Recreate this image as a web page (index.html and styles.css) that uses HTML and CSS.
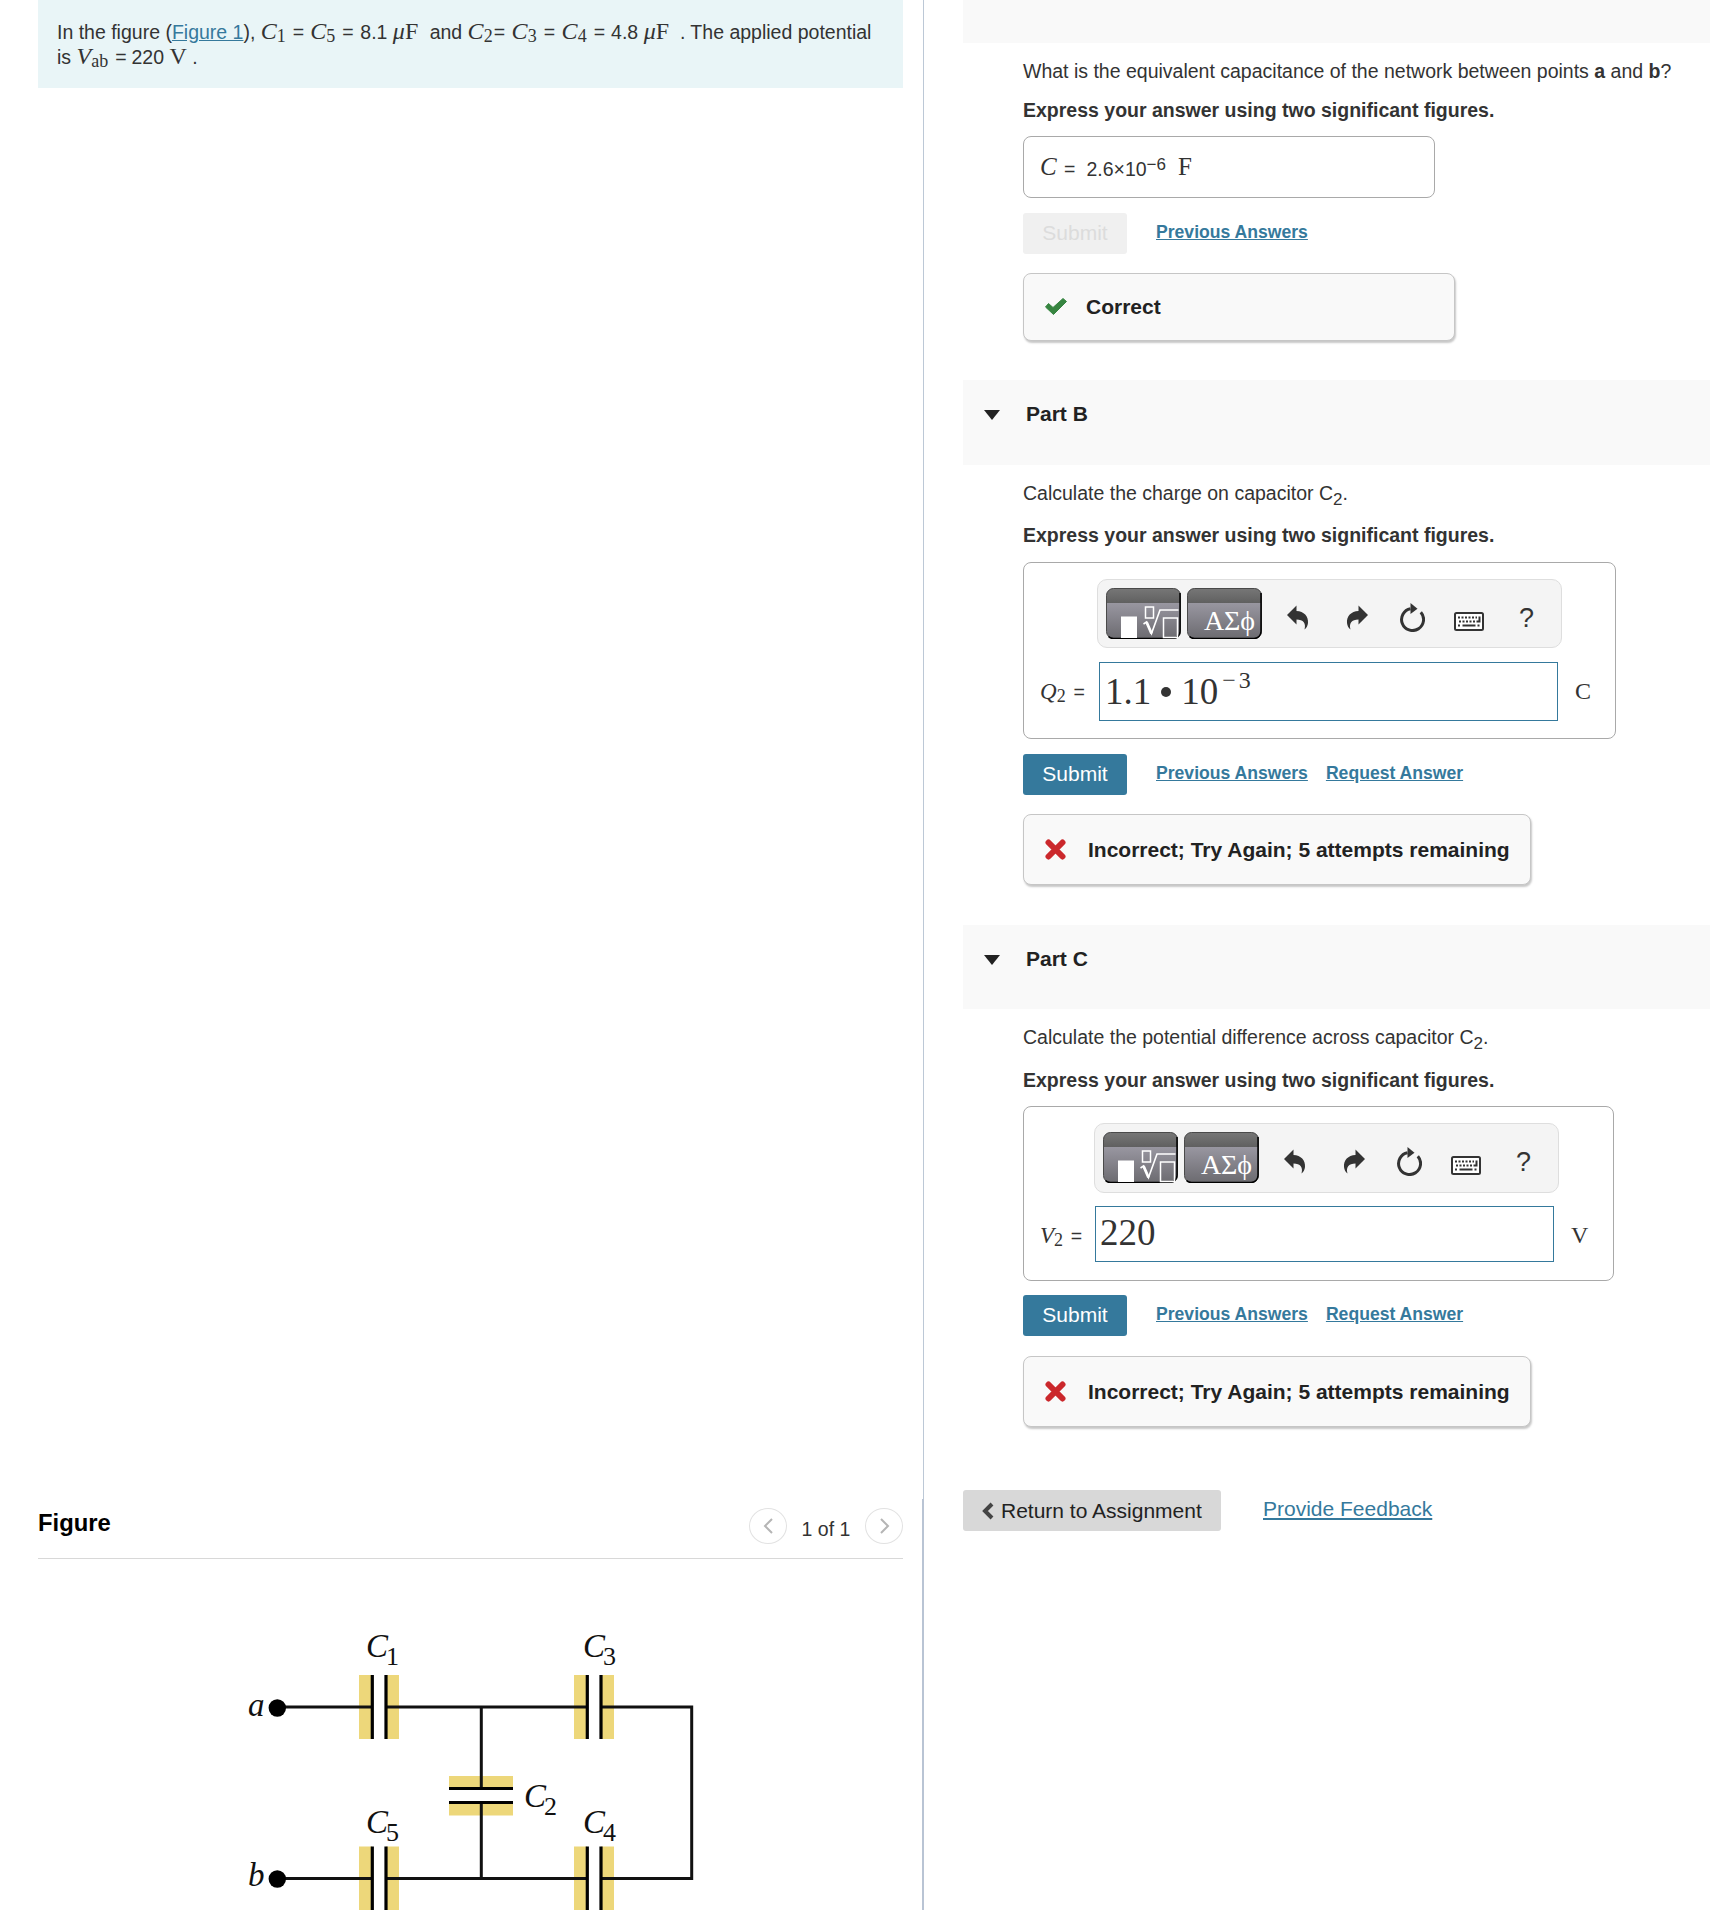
FILE: index.html
```html
<!DOCTYPE html>
<html lang="en">
<head>
    <meta charset="UTF-8">
    <meta name="viewport" content="width=device-width, initial-scale=1.0">
    <title>Capacitor Network</title>
    <link rel="stylesheet" href="styles.css">
</head>
<body>
    <!-- shared icons -->
    <svg class="icon-defs" width="0" height="0">
        <defs>
            <linearGradient id="btnTop" x1="0" y1="0" x2="0" y2="1">
                <stop offset="0" stop-color="#777"/>
                <stop offset="1" stop-color="#606060"/>
            </linearGradient>
            <linearGradient id="btnBody" x1="0" y1="0" x2="0" y2="1">
                <stop offset="0.3" stop-color="#9896a0"/>
                <stop offset="1" stop-color="#6c6b70"/>
            </linearGradient>
            <symbol id="btnFace" viewBox="0 0 75 51">
                <rect x="0.5" y="0.5" width="74" height="50" rx="7" fill="url(#btnBody)"/>
                <path d="M0.5 15V7.5a7 7 0 0 1 7-7h60a7 7 0 0 1 7 7V15z" fill="url(#btnTop)"/>
                <rect x="0.5" y="0.5" width="74" height="50" rx="7" fill="none" stroke="#4a4a4a"/>
                <path d="M74 5V43.500a7 7 0 0 1-7 7H7.500a7 7 0 0 1-5-2" fill="none" stroke="#000" stroke-width="1.500"/>
            </symbol>
            <symbol id="template" viewBox="0 0 75 51">
                <use href="#btnFace" width="75" height="51"/>
                <rect x="15" y="28.500" width="16" height="21.500" fill="#fff"/>
                <rect x="39.500" y="19" width="8" height="11" fill="none" stroke="#fff" stroke-width="1.500"/>
                <path d="M37.500 36l3-2 5 11.500L54 22h18.500" fill="none" stroke="#fff" stroke-width="1.600"/>
                <path d="M40.500 34l5 11.500" fill="none" stroke="#fff" stroke-width="2.800"/>
                <rect x="57.500" y="30" width="14" height="19.500" fill="none" stroke="#fff" stroke-width="1.500"/>
            </symbol>
            <symbol id="greek" viewBox="0 0 75 51">
                <use href="#btnFace" width="75" height="51"/>
                <text x="17" y="42" class="greek-text" textLength="51">ΑΣϕ</text>
            </symbol>
            <symbol id="undo" viewBox="0 0 22 25">
                <path d="M0 10L9.500 0.500V6C17 6.500 21.500 11 21 18c-.2 2.500-1.500 5-3.500 6.500C19.200 18.500 16.500 14.500 9.500 14.500V19.500z" fill="#333"/>
            </symbol>
            <symbol id="reset" viewBox="0 0 26 30">
                <path d="M21.800 10.200A11 11 0 1 1 11.500 6.700" fill="none" stroke="#333" stroke-width="3"/>
                <path d="M11.500 1L18.500 6.700L11.500 12z" fill="#333"/>
            </symbol>
            <symbol id="keyboard" viewBox="0 0 30 19">
                <rect x="1" y="1" width="28" height="17" rx="1.500" fill="#fff" stroke="#333" stroke-width="2"/>
                <path d="M4 5.500H23M5 9.500H22M4 13.500H7M23.500 13.500H26.500" stroke="#333" stroke-width="2" stroke-dasharray="2 1.500"/>
                <path d="M8.500 13.500H21.500M25.500 4.500V9.500H22.500" fill="none" stroke="#333" stroke-width="2"/>
            </symbol>
            <symbol id="check" viewBox="0 0 22 17">
                <path d="M0.500 9L3.500 5.500L8 9.500L18 0.500L21.500 3.500L8.500 16.500z" fill="#378541" stroke="#378541" stroke-linejoin="round"/>
            </symbol>
            <symbol id="cross" viewBox="0 0 21 21">
                <path d="M3.500 3.500L17.500 17.500M17.500 3.500L3.500 17.500" stroke="#cb282c" stroke-width="6" stroke-linecap="round"/>
            </symbol>
        </defs>
    </svg>

    <div class="page">
        <div class="left-pane">
            <div class="intro">
                In the figure (<a href="#">Figure 1</a>), <span class="var w49"><i>C</i><sub>1</sub> <b>=</b></span><span class="var w50"><i>C</i><sub>5</sub> <b>=</b></span>8.1 <span class="unit wide"><i>μ</i>F</span> and <span class="var w44"><i>C</i><sub>2</sub><b>=</b></span><span class="var w50"><i>C</i><sub>3</sub> <b>=</b></span><span class="var w49"><i>C</i><sub>4</sub> <b>=</b></span>4.8 <span class="unit"><i>μ</i>F</span>&nbsp; <span class="nowrap">. The applied potential</span><br>
                is <span class="var w55"><i>V</i><sub>ab</sub> <b>=</b></span>220 <span class="volt">V</span> .
            </div>
            <div class="figure">
                <div class="figure-header">
                    <h2>Figure</h2>
                    <div class="pager">
                        <span class="circle"><svg width="12" height="16"><path d="M10 1L3 8l7 7" fill="none" stroke="#b5b5b5" stroke-width="2"/></svg></span>
                        <span class="count">1 of 1</span>
                        <span class="circle"><svg width="12" height="16"><path d="M3 1l7 7-7 7" fill="none" stroke="#b5b5b5" stroke-width="2"/></svg></span>
                    </div>
                </div>
                <svg class="circuit" width="500" height="310" viewBox="220 1600 500 310">
                    <g fill="#edd77a">
                        <rect x="359" y="1675" width="13" height="64"/>
                        <rect x="386" y="1675" width="13" height="64"/>
                        <rect x="574" y="1675" width="13" height="64"/>
                        <rect x="601" y="1675" width="13" height="64"/>
                        <rect x="449" y="1776" width="64" height="12"/>
                        <rect x="449" y="1803" width="64" height="12.500"/>
                        <rect x="359" y="1846.500" width="13" height="64"/>
                        <rect x="386" y="1846.500" width="13" height="64"/>
                        <rect x="574" y="1846.500" width="13" height="64"/>
                        <rect x="601" y="1846.500" width="13" height="64"/>
                    </g>
                    <path d="M277 1707H372M386 1707H587M601 1707H691.700V1878.500H601M277 1878.500H372M386 1878.500H587M481.300 1707V1788M481.300 1803V1878.500" fill="none" stroke="#111" stroke-width="3"/>
                    <path d="M372.300 1675v64M386 1675v64M587.300 1675v64M601 1675v64M449 1788.500h64M449 1802.500h64M372.300 1846.500v64M386 1846.500v64M587.300 1846.500v64M601 1846.500v64" stroke="#000" stroke-width="3.200"/>
                    <circle cx="277.300" cy="1708" r="8.700"/>
                    <circle cx="277.300" cy="1879" r="8.700"/>
                    <g class="circuit-label">
                        <text x="248" y="1716">a</text>
                        <text x="248" y="1886">b</text>
                        <text x="366" y="1657">C</text><text class="num" x="386" y="1665">1</text>
                        <text x="583" y="1657">C</text><text class="num" x="603" y="1665">3</text>
                        <text x="524" y="1807">C</text><text class="num" x="544" y="1815">2</text>
                        <text x="366" y="1833">C</text><text class="num" x="386" y="1841">5</text>
                        <text x="583" y="1833">C</text><text class="num" x="603" y="1841">4</text>
                    </g>
                </svg>
            </div>
        </div>

        <div class="right-pane">
            <div class="part part-a">
                <div class="part-header"></div>
                <div class="part-body">
                    <p>What is the equivalent capacitance of the network between points <b>a</b> and <b>b</b>?</p>
                    <p class="express">Express your answer using two significant figures.</p>
                    <div class="answer-simple">
                        <i class="big-var">C</i><span>=</span><span class="value">2.6×10<sup>−6</sup></span><span class="big-unit">F</span>
                    </div>
                    <div class="actions">
                        <button class="submit" disabled>Submit</button>
                        <a href="#">Previous Answers</a>
                    </div>
                    <div class="feedback correct"><svg width="22" height="17"><use href="#check"/></svg>Correct</div>
                </div>
            </div>

            <div class="part part-b">
                <div class="part-header"><span class="caret"></span><h3>Part B</h3></div>
                <div class="part-body">
                    <p>Calculate the charge on capacitor C<sub>2</sub>.</p>
                    <p class="express">Express your answer using two significant figures.</p>
                    <div class="answer-box">
                        <div class="toolbar">
                            <svg width="75" height="51"><use href="#template"/></svg>
                            <svg class="greek-btn" width="75" height="51"><use href="#greek"/></svg>
                            <svg class="undo" width="22" height="25"><use href="#undo"/></svg>
                            <svg class="redo" width="22" height="25"><use href="#undo"/></svg>
                            <svg class="reset" width="26" height="30"><use href="#reset"/></svg>
                            <svg class="keyboard" width="30" height="19"><use href="#keyboard"/></svg>
                            <span class="help">?</span>
                        </div>
                        <div class="entry">
                            <span class="label"><i>Q</i><sub>2</sub> <b>=</b></span>
                            <div class="input">1.1<span class="dot"></span>10<span class="exp">−<span>3</span></span></div>
                            <span class="entry-unit">C</span>
                        </div>
                    </div>
                    <div class="actions">
                        <button class="submit">Submit</button>
                        <a href="#">Previous Answers</a>
                        <a href="#">Request Answer</a>
                    </div>
                    <div class="feedback"><svg width="21" height="21"><use href="#cross"/></svg>Incorrect; Try Again; 5 attempts remaining</div>
                </div>
            </div>

            <div class="part part-c">
                <div class="part-header"><span class="caret"></span><h3>Part C</h3></div>
                <div class="part-body">
                    <p>Calculate the potential difference across capacitor C<sub>2</sub>.</p>
                    <p class="express">Express your answer using two significant figures.</p>
                    <div class="answer-box">
                        <div class="toolbar">
                            <svg width="75" height="51"><use href="#template"/></svg>
                            <svg class="greek-btn" width="75" height="51"><use href="#greek"/></svg>
                            <svg class="undo" width="22" height="25"><use href="#undo"/></svg>
                            <svg class="redo" width="22" height="25"><use href="#undo"/></svg>
                            <svg class="reset" width="26" height="30"><use href="#reset"/></svg>
                            <svg class="keyboard" width="30" height="19"><use href="#keyboard"/></svg>
                            <span class="help">?</span>
                        </div>
                        <div class="entry">
                            <span class="label"><i>V</i><sub>2</sub> <b>=</b></span>
                            <div class="input">220</div>
                            <span class="entry-unit">V</span>
                        </div>
                    </div>
                    <div class="actions">
                        <button class="submit">Submit</button>
                        <a href="#">Previous Answers</a>
                        <a href="#">Request Answer</a>
                    </div>
                    <div class="feedback"><svg width="21" height="21"><use href="#cross"/></svg>Incorrect; Try Again; 5 attempts remaining</div>
                </div>
            </div>

            <div class="footer">
                <button class="return"><svg width="12" height="18"><path d="M10 2L3 9l7 7" fill="none" stroke="#444" stroke-width="4"/></svg>Return to Assignment</button>
                <a href="#">Provide Feedback</a>
            </div>
        </div>
    </div>
</body>
</html>
```
FILE: styles.css
```css
* {
    box-sizing: border-box;
}

body {
    margin: 0;
    background-color: #fff;
    color: #333;
    font-family: "Liberation Sans", Arial, sans-serif;
    font-size: 19.5px;
    line-height: 24px;
}

a {
    color: #35799c;
}

p {
    margin: 0;
    white-space: nowrap;
}

sub, sup {
    line-height: 0;
}

.icon-defs {
    position: absolute;
}

.page {
    display: flex;
    height: 1910px;
    overflow: hidden;
}

/* Left side */
.left-pane {
    width: 924px;
    display: flex;
    flex-direction: column;
    justify-content: space-between;
    background: linear-gradient(#bcc8d6, #bcc8d6) right top / 1px 1499px no-repeat;
}

.intro {
    margin: 0 21px 0 38px;
    height: 88px;
    padding: 20px 0 0 19px;
    background-color: #e9f5f7;
    line-height: 25px;
    white-space: nowrap;
}

.var,
.unit,
.volt {
    display: inline-block;
    font-family: "Liberation Serif", serif;
    font-size: 24px;
    line-height: 20px;
}

.unit.wide {
    margin-right: 6px;
}

.var sub {
    font-size: 18px;
    vertical-align: -3px;
}

.var b {
    margin-left: 1px;
    font-family: "Liberation Sans", Arial, sans-serif;
    font-size: 19.5px;
    font-weight: normal;
}

.w44 { width: 44px; }
.w49 { width: 49.5px; }
.w50 { width: 50px; }
.w55 { width: 55px; }

.figure {
    height: 411px;
    border-right: 2px solid #b9c4d4;
}

.figure-header {
    display: flex;
    justify-content: space-between;
    height: 60px;
    margin: 0 19px 0 38px;
    border-bottom: 1px solid #d8d8d8;
}

.figure-header h2 {
    margin: 12px 0 0;
    color: #000;
    font-size: 23.8px;
    line-height: 24px;
}

.pager {
    display: flex;
    padding-top: 9px;
}

.circle {
    display: flex;
    align-items: center;
    justify-content: center;
    width: 38px;
    height: 36px;
    border: 1px solid #e2e2e2;
    border-radius: 50%;
}

.count {
    width: 78px;
    padding-top: 9px;
    text-align: center;
}

.circuit {
    display: block;
    margin: 41px 0 0 220px;
}

.circuit-label {
    font-family: "Liberation Serif", serif;
    font-size: 33px;
    font-style: italic;
    fill: #111;
}

.circuit-label .num {
    font-size: 26px;
    font-style: normal;
}

/* Right side */
.right-pane {
    flex: 1;
    padding-left: 39px;
}

.part-header {
    display: flex;
    height: 85px;
    padding: 29px 0 0 21px;
    background-color: #f9f9f9;
}

.part-a .part-header {
    height: 43px;
}

.part-header h3 {
    margin: 0 0 0 26px;
    color: #222;
    font-size: 21px;
    line-height: 10px;
}

.caret {
    width: 16px;
    height: 10px;
    margin-top: 1px;
    border: 8px solid transparent;
    border-top: 10px solid #222;
    border-bottom: 0;
}

.part-body {
    padding: 16px 0 0 60px;
}

.part-body p sub {
    font-size: 17px;
    vertical-align: -5px;
}

.express {
    margin-top: 15px;
    font-weight: bold;
}

.answer-simple {
    width: 412px;
    height: 62px;
    margin-top: 14px;
    padding: 20px 0 0 16px;
    border: 1px solid #a9a9a9;
    border-radius: 8px;
    white-space: nowrap;
}

.answer-simple sup {
    font-size: 17px;
    vertical-align: 6px;
}

.big-var,
.big-unit {
    display: inline-block;
    font-family: "Liberation Serif", serif;
    font-size: 25px;
    line-height: 20px;
    vertical-align: 1px;
}

.big-var {
    width: 24px;
}

.value {
    margin: 0 12px 0 11px;
}

.actions {
    display: flex;
    margin-top: 15px;
    font-size: 17.6px;
    font-weight: bold;
    line-height: 39px;
}

.actions a {
    margin-right: 18px;
}

.submit {
    width: 104px;
    height: 41px;
    margin-right: 29px;
    padding: 0 0 1px;
    border: none;
    border-radius: 3px;
    background-color: #35799c;
    color: #fff;
    font-family: inherit;
    font-size: 21px;
}

.submit:disabled {
    background-color: #f0f0f0;
    color: #dcdcdc;
}

.feedback {
    display: flex;
    align-items: center;
    width: 508px;
    height: 71px;
    margin-top: 19px;
    padding-left: 21px;
    border: 1px solid #c6c6c6;
    border-radius: 8px;
    background-color: #f9f9f9;
    box-shadow: 1px 2px 2px rgba(0,0,0,0.22);
    color: #222;
    font-size: 21px;
    font-weight: bold;
    white-space: nowrap;
}

.feedback svg {
    margin-right: 22px;
}

.feedback.correct {
    width: 432px;
    height: 68px;
}

.feedback.correct svg {
    margin: 0 19px 2px 0;
}

.part-b {
    margin-top: 39px;
}

.part-b .express {
    margin-top: 18px;
}

.part-c {
    margin-top: 40px;
}

.part-c .part-header {
    height: 84px;
}

.part-c .express {
    margin-top: 19px;
}

.answer-box {
    width: 593px;
    height: 177px;
    margin-top: 15px;
    padding: 16px 0 0 16px;
    border: 1px solid #a9a9a9;
    border-radius: 8px;
}

.toolbar {
    display: flex;
    width: 465px;
    height: 69px;
    margin-left: 57px;
    padding: 8px 0 0 8px;
    border: 1px solid #dedede;
    border-radius: 10px;
    background-color: #f4f4f4;
}

.greek-btn {
    margin-left: 6px;
}

.greek-text {
    font-family: "Liberation Serif", serif;
    font-size: 28px;
    fill: #fff;
}

.undo {
    margin: 17px 0 0 25px;
}

.redo {
    margin: 17px 0 0 37px;
    transform: scaleX(-1);
}

.reset {
    margin: 14px 0 0 31px;
}

.keyboard {
    margin: 24px 0 0 29px;
}

.help {
    margin: 18px 0 0 35px;
    font-size: 27px;
}

.entry {
    display: flex;
    margin-top: 14px;
}

.label {
    width: 59px;
    padding-top: 18px;
    font-family: "Liberation Serif", serif;
    font-size: 23px;
    white-space: nowrap;
}

.label sub {
    font-size: 18px;
    vertical-align: -3px;
}

.label b {
    margin-left: 2px;
    font-family: "Liberation Sans", Arial, sans-serif;
    font-size: 19.5px;
    font-weight: normal;
}

.input {
    display: flex;
    width: 459px;
    height: 59px;
    padding: 7px 0 0 5px;
    border: 1px solid #35799c;
    font-family: "Liberation Serif", serif;
    font-size: 37px;
    line-height: 44px;
}

.dot {
    width: 10px;
    height: 10px;
    margin: 17px 10px 0;
    border-radius: 50%;
    background-color: #333;
}

.exp {
    margin: -12px 0 0 4px;
    font-size: 24px;
    letter-spacing: 3px;
}

.entry-unit {
    margin: 17px 0 0 17px;
    font-family: "Liberation Serif", serif;
    font-size: 24px;
}

.part-c .answer-box {
    width: 591px;
    height: 175px;
    margin-top: 14px;
}

.part-c .toolbar {
    height: 70px;
    margin-left: 54px;
}

.part-c .entry {
    margin-top: 13px;
}

.part-c .label {
    width: 55px;
}

.part-c .input {
    height: 56px;
    padding: 4px 0 0 4px;
}

.part-c .actions {
    margin-top: 14px;
}

.part-c .feedback {
    margin-top: 20px;
}

.footer {
    display: flex;
    margin-top: 63px;
    font-size: 21px;
    line-height: 37px;
}

.return {
    display: flex;
    align-items: center;
    width: 258px;
    height: 41px;
    margin-right: 42px;
    padding: 0 0 0 19px;
    border: none;
    border-radius: 3px;
    background-color: #d8d8d8;
    color: #222;
    font-family: inherit;
    font-size: 21px;
    white-space: nowrap;
}

.return svg {
    margin-right: 7px;
}
```
